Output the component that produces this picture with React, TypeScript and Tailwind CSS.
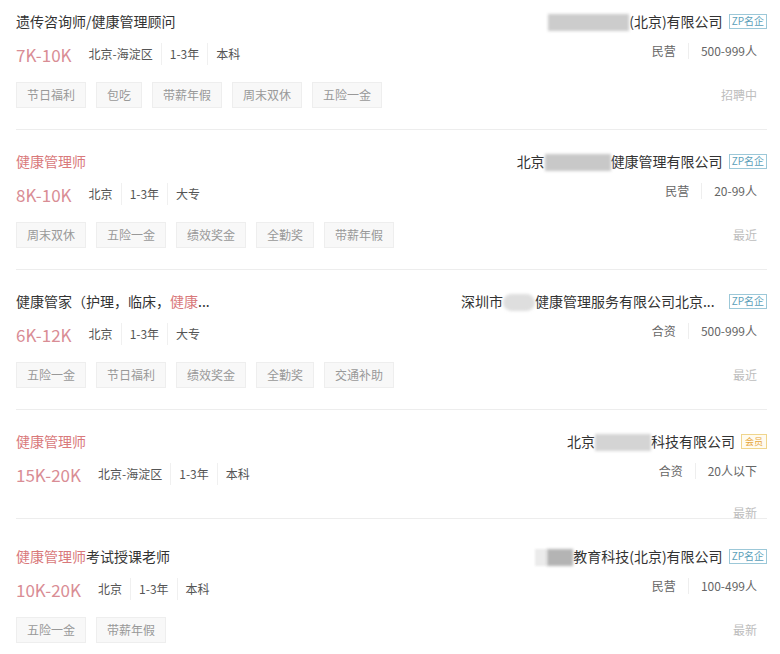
import React, { FC, ReactNode } from 'react'

type Job = {
    title: ReactNode
    salary: string
    meta: string[]
    tags: string[]
    company: ReactNode
    badge: 'zp' | 'member'
    type: string
    size: string
    status: string
}

// grey smudge that hides part of a company name
const Smudge: FC<{ w: number; tone?: string; round?: boolean }> = ({ w, tone = 'bg-[#c4c4c4]', round }) => (
    <span
        className={`inline-block h-[17px] align-middle blur-[1.5px] ${tone} ${round ? 'rounded-full' : ''}`}
        style={{ width: w }}
    />
)

const Hl: FC<{ children: ReactNode }> = ({ children }) => <span className="text-[#d9797b]">{children}</span>

const jobs: Job[] = [
    {
        title: '遗传咨询师/健康管理顾问',
        salary: '7K-10K',
        meta: ['北京-海淀区', '1-3年', '本科'],
        tags: ['节日福利', '包吃', '带薪年假', '周末双休', '五险一金'],
        company: <><Smudge w={81} tone="bg-[#cccccc]" />(北京)有限公司</>,
        badge: 'zp',
        type: '民营',
        size: '500-999人',
        status: '招聘中',
    },
    {
        title: <Hl>健康管理师</Hl>,
        salary: '8K-10K',
        meta: ['北京', '1-3年', '大专'],
        tags: ['周末双休', '五险一金', '绩效奖金', '全勤奖', '带薪年假'],
        company: <>北京<Smudge w={66} tone="bg-[#c8c8c8]" />健康管理有限公司</>,
        badge: 'zp',
        type: '民营',
        size: '20-99人',
        status: '最近',
    },
    {
        title: <>健康管家（护理，临床，<Hl>健康</Hl>...</>,
        salary: '6K-12K',
        meta: ['北京', '1-3年', '大专'],
        tags: ['五险一金', '节日福利', '绩效奖金', '全勤奖', '交通补助'],
        company: <>深圳市<Smudge w={32} tone="bg-[#dedede]" round />健康管理服务有限公司北京...</>,
        badge: 'zp',
        type: '合资',
        size: '500-999人',
        status: '最近',
    },
    {
        title: <Hl>健康管理师</Hl>,
        salary: '15K-20K',
        meta: ['北京-海淀区', '1-3年', '本科'],
        tags: [],
        company: <>北京<Smudge w={56} tone="bg-[#d4d4d4]" />科技有限公司</>,
        badge: 'member',
        type: '合资',
        size: '20人以下',
        status: '最新',
    },
    {
        title: <><Hl>健康管理师</Hl>考试授课老师</>,
        salary: '10K-20K',
        meta: ['北京', '1-3年', '本科'],
        tags: ['五险一金', '带薪年假'],
        company: <><span className="inline-block h-[17px] w-[12px] bg-[#ebebeb] align-middle blur-[1px]" /><Smudge w={26} tone="bg-[#b4b4b4]" />教育科技(北京)有限公司</>,
        badge: 'zp',
        type: '民营',
        size: '100-499人',
        status: '最新',
    },
]

const Badge: FC<{ kind: Job['badge'] }> = ({ kind }) =>
    kind === 'zp' ? (
        <span className="flex h-[15px] items-center border border-[#9cc8d8] px-[2px] text-[10px] leading-none text-[#5c9fba]">
            ZP名企
        </span>
    ) : (
        <span className="flex h-[15px] items-center border border-[#f0d58c] bg-[#fffbef] px-[3px] text-[9px] leading-none text-[#e6a53a]">
            会员
        </span>
    )

const JobCard: FC<{ job: Job; index: number }> = ({ job, index }) => {
    const pad = index === 0 ? 'pt-[11px] pb-[21px]' : index === 4 ? 'pt-[27px] pb-[21px]' : index === 3 ? 'pt-[21px] pb-0' : 'pt-[21px] pb-[21px]'
    return (
        <div className={`flex justify-between border-b border-[#ededed] ${pad}`}>
            <div className="flex flex-col">
                <div className="flex h-[20px] items-center text-[14px] text-[#333]">
                    <span className="whitespace-nowrap">{job.title}</span>
                </div>
                <div className="mt-[10px] flex h-[26px] items-center">
                    <span className="text-[17px] leading-none text-[#d98d95]">{job.salary}</span>
                    <ul className="ml-[9px] flex items-center text-[12px] text-[#555]">
                        {job.meta.map((m, i) => (
                            <li key={i} className={`flex h-[22px] items-center px-[8px] ${i > 0 ? 'border-l border-[#f0f0f0]' : ''}`}>
                                {m}
                            </li>
                        ))}
                    </ul>
                </div>
                <div className={`mt-[15px] flex gap-[10px] ${job.tags.length ? 'h-[26px]' : 'h-[16px]'}`}>
                    {job.tags.map((t) => (
                        <span key={t} className="flex h-[26px] items-center border border-[#eeeeee] bg-[#f8f8f8] px-[10px] text-[12px] text-[#999]">
                            {t}
                        </span>
                    ))}
                </div>
            </div>
            <div className="flex flex-col items-end">
                <div className="flex h-[20px] items-center gap-[6px]">
                    <span className={`whitespace-nowrap text-[14px] leading-[20px] text-[#333] ${index === 2 ? 'mr-[8px]' : ''}`}>{job.company}</span>
                    <Badge kind={job.badge} />
                </div>
                <div className="mt-[8px] flex h-[24px] items-center pr-[10px] text-[12px] text-[#666]">
                    <span>{job.type}</span>
                    <span className="mx-[12px] h-[16px] w-px bg-[#eeeeee]" />
                    <span>{job.size}</span>
                </div>
                <div className={`mt-[19px] flex items-center pr-[10px] text-[12px] text-[#bdbdbd] ${job.tags.length ? 'h-[26px]' : 'h-[16px] translate-y-[3px]'}`}>
                    {job.status}
                </div>
            </div>
        </div>
    )
}

const App: FC = () => {
    return (
        <div className="h-[654px] w-[780px] overflow-hidden bg-white pl-4 pr-[13px]" style={{ fontFamily: '"Noto Sans CJK SC", "Liberation Sans", sans-serif' }}>
            {jobs.map((job, i) => (
                <JobCard key={i} job={job} index={i} />
            ))}
        </div>
    )
}

export default App
